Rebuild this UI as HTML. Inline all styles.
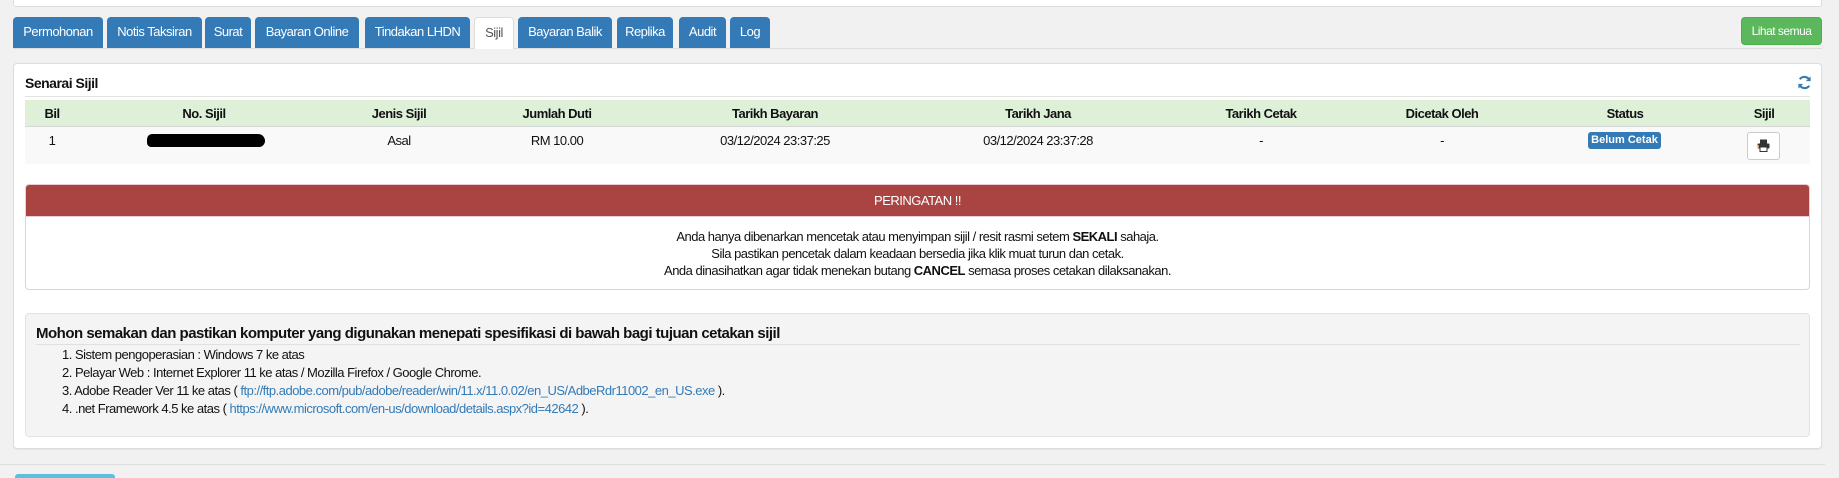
<!DOCTYPE html>
<html><head><meta charset="utf-8">
<style>
*{box-sizing:border-box;margin:0;padding:0}
body{width:1839px;height:476px;background:#f1f1f1;font-family:"Liberation Sans",Arial,sans-serif;font-size:13px;letter-spacing:-0.5px;color:#111;position:relative;overflow:hidden}
.abs{position:absolute}
.top{left:13px;top:-4px;width:1809px;height:11px;background:#fff;border:1px solid #ddd;border-radius:3px}
.tab{position:absolute;top:17px;height:31px;background:#337ab7;color:#fff;border-radius:4px 4px 0 0;text-align:center;line-height:30px;font-size:13px}
.tab.act{background:#fff;color:#555;border:1px solid #ddd;border-bottom:none;top:17px;height:32px}
.tline{left:13px;top:48px;width:1809px;height:1px;background:#ddd}
.btn{left:1741px;top:17px;width:81px;height:28px;background:#5cb85c;border:1px solid #4cae4c;border-radius:4px;color:#fff;text-align:center;line-height:26px;font-size:12px}
.panel{left:13px;top:63px;width:1809px;height:386px;background:#fff;border:1px solid #ddd;border-radius:4px;box-shadow:0 1px 1px rgba(0,0,0,.05)}
.ttl{left:25px;top:75px;font-weight:bold;font-size:14px}
.hl{left:25px;top:96px;width:1785px;height:1px;background:#e3e3e3}
.thead{left:25px;top:100px;width:1785px;height:27px;background:#dff0d8;border-bottom:1px solid #d6d6d6}
.trow{left:25px;top:127px;width:1785px;height:37px;background:#f9f9f9}
.c{position:absolute;transform:translateX(-50%);white-space:nowrap}
.th{top:106px;font-weight:bold}
.td{top:133px}
.badge{left:1588px;top:132px;width:73px;height:17px;background:#337ab7;color:#fff;border-radius:3px;font-size:11px;font-weight:bold;text-align:center;line-height:17px;letter-spacing:0}
.pbtn{left:1747px;top:132px;width:33px;height:28px;background:#fff;border:1px solid #ccc;border-radius:3px}
.alert{left:25px;top:184px;width:1785px;height:106px;border:1px solid #ebccd1;border-radius:4px;background:#fff;overflow:hidden}
.ahead{left:0;top:0;width:100%;height:32px;background:#a94442;color:#fff;text-align:center;line-height:32px;border-bottom:1px solid #ebccd1}
.al{left:0;width:100%;text-align:center}
.well{left:25px;top:313px;width:1785px;height:124px;background:#f4f4f4;border:1px solid #e3e3e3;border-radius:4px}
.wt{left:36px;top:325px;font-weight:bold;font-size:15px;letter-spacing:-0.5px}
.whl{left:36px;top:344px;width:1764px;height:1px;background:#e0e0e0}
.li{left:62px}
a{color:#337ab7;text-decoration:none}
.bline{left:0;top:464px;width:1825px;height:1px;background:#ddd}
.bbtn{left:15px;top:474px;width:100px;height:4px;background:#5bc0de;border-radius:3px 3px 0 0}
</style></head><body>
<div class="abs top"></div>
<div class="tab" style="left:13px;width:90px">Permohonan</div>
<div class="tab" style="left:107px;width:95px">Notis Taksiran</div>
<div class="tab" style="left:205px;width:46px">Surat</div>
<div class="tab" style="left:255px;width:104px">Bayaran Online</div>
<div class="tab" style="left:365px;width:105px">Tindakan LHDN</div>
<div class="abs tline"></div>
<div class="tab act" style="left:474px;width:40px">Sijil</div>
<div class="tab" style="left:518px;width:94px">Bayaran Balik</div>
<div class="tab" style="left:617px;width:56px">Replika</div>
<div class="tab" style="left:679px;width:47px">Audit</div>
<div class="tab" style="left:730px;width:40px">Log</div>
<div class="abs btn">Lihat semua</div>

<div class="abs panel"></div>
<div class="abs ttl">Senarai Sijil</div>
<svg class="abs" style="left:1797px;top:75px" width="15" height="15" viewBox="0 0 16 16"><path d="M13.5 6A6 6 0 0 0 3 4.5M2.5 10A6 6 0 0 0 13 11.5" stroke="#337ab7" stroke-width="2.2" fill="none"/><path d="M14.5 1.5v5h-5z M1.5 14.5v-5h5z" fill="#337ab7"/></svg>
<div class="abs hl"></div>
<div class="abs thead"></div>
<div class="abs trow"></div>
<div class="c th" style="left:52px">Bil</div>
<div class="c th" style="left:204px">No. Sijil</div>
<div class="c th" style="left:399px">Jenis Sijil</div>
<div class="c th" style="left:557px">Jumlah Duti</div>
<div class="c th" style="left:775px">Tarikh Bayaran</div>
<div class="c th" style="left:1038px">Tarikh Jana</div>
<div class="c th" style="left:1261px">Tarikh Cetak</div>
<div class="c th" style="left:1442px">Dicetak Oleh</div>
<div class="c th" style="left:1625px">Status</div>
<div class="c th" style="left:1764px">Sijil</div>
<div class="c td" style="left:52px">1</div>
<div class="abs" style="left:147px;top:134px;width:118px;height:13px;background:#000;border-radius:6px 8px 7px 5px"></div>
<div class="c td" style="left:399px">Asal</div>
<div class="c td" style="left:557px">RM 10.00</div>
<div class="c td" style="left:775px">03/12/2024 23:37:25</div>
<div class="c td" style="left:1038px">03/12/2024 23:37:28</div>
<div class="c td" style="left:1261px">-</div>
<div class="c td" style="left:1442px">-</div>
<div class="abs badge">Belum Cetak</div>
<div class="abs pbtn"></div>
<svg class="abs" style="left:1757px;top:139px" width="13" height="13" viewBox="0 0 13 13"><rect x="3" y="0.5" width="7" height="4" fill="#333"/><rect x="0.5" y="4.5" width="12" height="5" rx="1" fill="#333"/><rect x="3" y="8" width="7" height="4.5" fill="#fff" stroke="#333"/><rect x="0.5" y="6" width="1.5" height="3" fill="#e8912b"/></svg>

<div class="abs alert">
<div class="abs ahead">PERINGATAN !!</div>
<div class="abs al" style="top:44px">Anda hanya dibenarkan mencetak atau menyimpan sijil / resit rasmi setem <b>SEKALI</b> sahaja.</div>
<div class="abs al" style="top:61px">Sila pastikan pencetak dalam keadaan bersedia jika klik muat turun dan cetak.</div>
<div class="abs al" style="top:78px">Anda dinasihatkan agar tidak menekan butang <b>CANCEL</b> semasa proses cetakan dilaksanakan.</div>
</div>

<div class="abs well"></div>
<div class="abs wt">Mohon semakan dan pastikan komputer yang digunakan menepati spesifikasi di bawah bagi tujuan cetakan sijil</div>
<div class="abs whl"></div>
<div class="abs li" style="top:347px">1. Sistem pengoperasian : Windows 7 ke atas</div>
<div class="abs li" style="top:365px">2. Pelayar Web : Internet Explorer 11 ke atas / Mozilla Firefox / Google Chrome.</div>
<div class="abs li" style="top:383px">3. Adobe Reader Ver 11 ke atas ( <a>ftp://ftp.adobe.com/pub/adobe/reader/win/11.x/11.0.02/en_US/AdbeRdr11002_en_US.exe</a> ).</div>
<div class="abs li" style="top:401px">4. .net Framework 4.5 ke atas ( <a>https://www.microsoft.com/en-us/download/details.aspx?id=42642</a> ).</div>

<div class="abs bline"></div>
<div class="abs bbtn"></div>
</body></html>
